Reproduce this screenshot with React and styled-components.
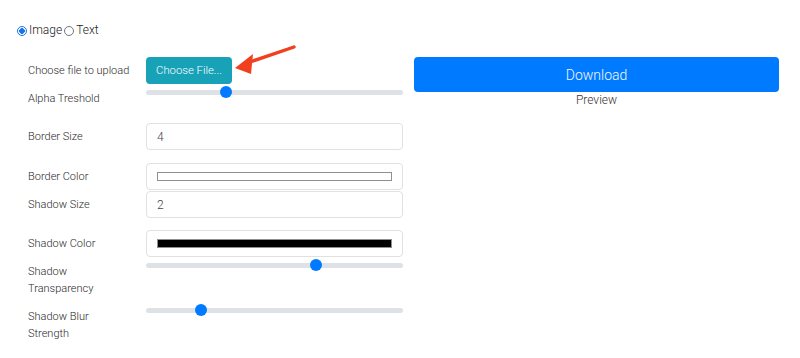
import { useState } from "react";
import styled, { createGlobalStyle } from "styled-components";

const GlobalStyle = createGlobalStyle`
    body {
        margin: 0;
        background: #ffffff;
        font-family: Roboto, "Liberation Sans", Arial, sans-serif;
        font-size: 12px;
        font-weight: 300;
        color: #333333;
    }
`

export default function App() {
    const [mode, setMode] = useState("image");
    const [alpha, setAlpha] = useState(30);
    const [borderSize, setBorderSize] = useState("4");
    const [borderColor, setBorderColor] = useState("#ffffff");
    const [shadowSize, setShadowSize] = useState("2");
    const [shadowColor, setShadowColor] = useState("#000000");
    const [transparency, setTransparency] = useState(67);
    const [blur, setBlur] = useState(20);

    return (
        <Page>
            <GlobalStyle />

            <RadioRow>
                <Radio type="radio" name="mode" checked={mode === "image"} onChange={() => setMode("image")} />
                <span>Image</span>
                <Radio type="radio" name="mode" checked={mode === "text"} onChange={() => setMode("text")} />
                <span>Text</span>
            </RadioRow>

            <Main>
                <Form>
                    <Row $top={0} $center>
                        <Label>Choose file to upload</Label>
                        <FileButton type="button">Choose File...</FileButton>
                    </Row>

                    <Row $top={2}>
                        <Label $pad>Alpha Treshold</Label>
                        <Slider type="range" min="0" max="100" value={alpha} onChange={(e) => setAlpha(e.target.value)} />
                    </Row>

                    <Row $top={16} $center>
                        <Label>Border Size</Label>
                        <TextInput type="text" value={borderSize} onChange={(e) => setBorderSize(e.target.value)} />
                    </Row>

                    <Row $top={13} $center>
                        <Label>Border Color</Label>
                        <ColorInput type="color" value={borderColor} onChange={(e) => setBorderColor(e.target.value)} />
                    </Row>

                    <Row $top={1} $center>
                        <Label>Shadow Size</Label>
                        <TextInput type="text" value={shadowSize} onChange={(e) => setShadowSize(e.target.value)} />
                    </Row>

                    <Row $top={12} $center>
                        <Label>Shadow Color</Label>
                        <ColorInput type="color" value={shadowColor} onChange={(e) => setShadowColor(e.target.value)} />
                    </Row>

                    <Row $top={2}>
                        <Label $pad>Shadow<br />Transparency</Label>
                        <Slider type="range" min="0" max="100" value={transparency} onChange={(e) => setTransparency(e.target.value)} />
                    </Row>

                    <Row $top={7}>
                        <Label $pad>Shadow Blur<br />Strength</Label>
                        <Slider type="range" min="0" max="100" value={blur} onChange={(e) => setBlur(e.target.value)} />
                    </Row>
                </Form>

                <Side>
                    <DownloadButton type="button">Download</DownloadButton>
                    <Preview>Preview</Preview>
                </Side>
            </Main>

            <Arrow width="70" height="40" viewBox="0 0 70 40">
                <line x1="64" y1="5" x2="14" y2="22" stroke="#f0401f" strokeWidth="3.4" strokeLinecap="round" />
                <polygon points="5,26 23,12 21,32" fill="#f0401f" />
            </Arrow>
        </Page>
    )
}

const Page = styled.div`
    position: relative;
    width: 800px;
    height: 358px;
    padding-top: 22px;
    box-sizing: border-box;
`

const RadioRow = styled.div`
    display: flex;
    align-items: center;
    gap: 2px;
    padding-left: 17px;
    height: 17px;
    line-height: 17px;
    color: #222222;
`

const Radio = styled.input`
    appearance: none;
    width: 10px;
    height: 10px;
    margin: 0;
    border: 1px solid #767676;
    border-radius: 50%;
    box-sizing: border-box;
    background: #ffffff;

    &:checked {
        border-color: #1a73e8;
        background: radial-gradient(circle, #1a73e8 0 2.6px, #ffffff 3px);
    }
`

const Main = styled.div`
    display: flex;
    gap: 11px;
    margin-top: 18px;
    padding-left: 28px;
`

const Form = styled.div`
    width: 375px;
    display: flex;
    flex-direction: column;
`

const Row = styled.div`
    display: grid;
    grid-template-columns: 118px 257px;
    align-items: ${(props) => (props.$center ? "center" : "start")};
    margin-top: ${(props) => props.$top}px;
`

const Label = styled.div`
    font-size: 11px;
    line-height: 17px;
    color: #2a2a2a;
    padding-top: ${(props) => (props.$pad ? "4px" : "0")};
    grid-column: 1;
    grid-row: 1;
`

const FileButton = styled.button`
    justify-self: start;
    width: 86px;
    height: 27px;
    border: none;
    border-radius: 4px;
    background: #17a2b8;
    color: #ffffff;
    font-family: inherit;
    font-size: 11.3px;
    font-weight: 300;
    padding: 0;
`

const Slider = styled.input`
    appearance: none;
    width: 257px;
    height: 12px;
    margin: 0;
    background: transparent;
    grid-column: 2;
    grid-row: 1;

    &::-webkit-slider-runnable-track {
        height: 5px;
        border-radius: 3px;
        background: #dee2e6;
    }

    &::-webkit-slider-thumb {
        appearance: none;
        width: 12px;
        height: 12px;
        margin-top: -3.5px;
        border-radius: 50%;
        background: #007bff;
        border: none;
    }
`

const TextInput = styled.input`
    width: 257px;
    height: 27px;
    box-sizing: border-box;
    margin: 0;
    padding: 0 10px;
    border: 1px solid #e1e1e1;
    border-radius: 4px;
    font-family: inherit;
    font-size: 12px;
    font-weight: 300;
    color: #444444;
    outline: none;
`

const ColorInput = styled.input`
    appearance: none;
    width: 257px;
    height: 27px;
    box-sizing: border-box;
    margin: 0;
    padding: 8px 10px;
    border: 1px solid #e1e1e1;
    border-radius: 4px;
    background: #ffffff;

    &::-webkit-color-swatch-wrapper {
        padding: 0;
    }

    &::-webkit-color-swatch {
        border: 1px solid #8f8f8f;
        border-radius: 0;
    }
`

const Side = styled.div`
    width: 365px;
    display: flex;
    flex-direction: column;
    align-items: center;
`

const DownloadButton = styled.button`
    width: 100%;
    height: 35px;
    border: none;
    border-radius: 4px;
    background: #007bff;
    color: #f4f8ff;
    font-family: inherit;
    font-size: 14px;
    font-weight: 300;
`

const Preview = styled.div`
    line-height: 17px;
    color: #333333;
`

const Arrow = styled.svg`
    position: absolute;
    left: 230px;
    top: 42px;
`
